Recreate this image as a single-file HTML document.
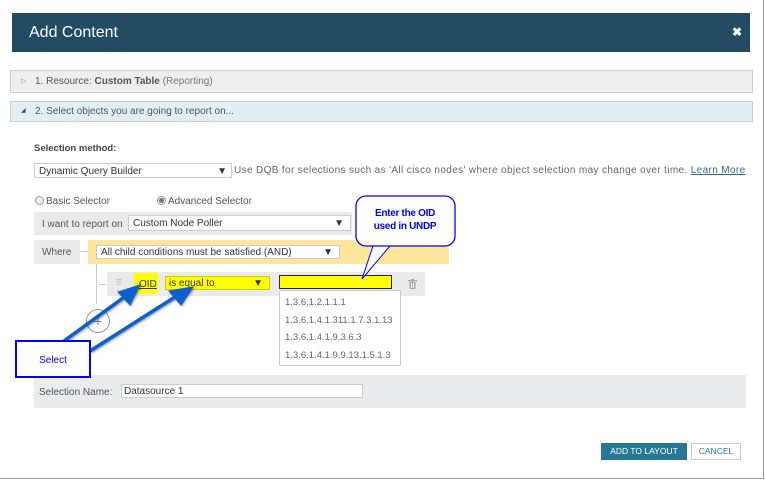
<!DOCTYPE html>
<html><head><style>
*{box-sizing:border-box;margin:0;padding:0}
body{width:765px;height:480px;background:#fff;font-family:"Liberation Sans",sans-serif;font-size:10px;color:#333;position:relative;overflow:hidden}
.a{position:absolute;white-space:nowrap}
</style></head><body>
<div class="a" style="left:0;top:0;width:764px;height:479px;border-right:1px solid #999;border-bottom:1px solid #999"></div>
<div class="a" style="left:12px;top:13px;width:738px;height:39px;background:#234b63"></div>
<div class="a" style="left:29px;top:24px;font-size:16px;color:#fff">Add Content</div>
<div class="a" style="left:732px;top:25px;font-size:12px;color:#fff;font-weight:bold">✖</div>

<div class="a" style="left:10px;top:70px;width:743px;height:23px;background:#eee;border:1px solid #ccc"></div>
<div class="a" style="left:21px;top:77px;font-size:7px;color:#999">▷</div>
<div class="a" style="left:35px;top:76px;color:#555">1. Resource: <b>Custom Table</b> <span style="color:#777">(Reporting)</span></div>
<div class="a" style="left:10px;top:101px;width:743px;height:21px;background:#e1eff5;border:1px solid #ccc"></div>
<div class="a" style="left:21px;top:107px;font-size:6px;color:#444">◢</div>
<div class="a" style="left:35px;top:106px;color:#555">2. Select objects you are going to report on...</div>

<div class="a" style="left:34px;top:143px;font-weight:bold;color:#444;font-size:9.5px">Selection method:</div>
<div class="a" style="left:34px;top:163px;width:198px;height:15px;border:1px solid #ccc;padding:2px 4px 0">Dynamic Query Builder<span style="position:absolute;right:4px">▼</span></div>
<div class="a" style="left:234px;top:165px;color:#666;letter-spacing:0.36px">Use DQB for selections such as 'All cisco nodes' where object selection may change over time. <span style="color:#2a6a9a;text-decoration:underline">Learn More</span></div>

<div class="a" style="left:35px;top:196px;width:9px;height:9px;border:1px solid #999;border-radius:50%;background:#eee"></div>
<div class="a" style="left:46px;top:196px;color:#555">Basic Selector</div>
<div class="a" style="left:157px;top:196px;width:9px;height:9px;border:1px solid #999;border-radius:50%;background:#eee"><div style="width:5px;height:5px;margin:1px;border-radius:50%;background:#777"></div></div>
<div class="a" style="left:168px;top:196px;color:#555">Advanced Selector</div>

<div class="a" style="left:34px;top:212px;width:318px;height:23px;background:#eaeaea"></div>
<div class="a" style="left:42px;top:219px;color:#555">I want to report on</div>
<div class="a" style="left:128px;top:215px;width:223px;height:16px;border:1px solid #ccc;background:#fff;padding:2px 4px 0">Custom Node Poller<span style="position:absolute;right:6px">▼</span></div>

<div class="a" style="left:34px;top:240px;width:46px;height:24px;background:#eaeaea"></div>
<div class="a" style="left:42px;top:247px;color:#555">Where</div>
<div class="a" style="left:80px;top:251px;width:8px;height:1px;background:#ccc"></div>
<div class="a" style="left:88px;top:240px;width:361px;height:24px;background:#fde69c"></div>
<div class="a" style="left:96px;top:245px;width:244px;height:14px;border:1px solid #ccc;background:#fff;padding:1px 4px 0">All child conditions must be satisfied (AND)<span style="position:absolute;right:6px">▼</span></div>
<div class="a" style="left:96px;top:264px;width:1px;height:40px;background:#ccc"></div>
<div class="a" style="left:99px;top:284px;width:7px;height:1px;background:#ccc"></div>

<div class="a" style="left:107px;top:272px;width:318px;height:24px;background:#eaeaea"></div>
<div class="a" style="left:116px;top:278px;color:#aaa;font-size:8px">⠿</div>
<div class="a" style="left:134px;top:273px;width:24px;height:21px;background:#ffff00"></div>
<div class="a" style="left:139px;top:279px;text-decoration:underline;color:#333">OID</div>
<div class="a" style="left:165px;top:276px;width:105px;height:14px;background:#ffff00;border:1px solid #cc0;padding:1px 3px 0">is equal to<span style="position:absolute;right:6px">▼</span></div>
<div class="a" style="left:279px;top:275px;width:113px;height:14px;background:#ffff00;border:1px solid #224"></div>
<svg class="a" style="left:408px;top:279px" width="9" height="10"><rect x="0" y="1" width="9" height="1.5" fill="#9ab"/><rect x="3" y="0" width="3" height="1" fill="#9ab"/><rect x="1.5" y="3" width="6" height="7" fill="#9ab"/><rect x="3" y="4" width="1" height="5" fill="#fff"/><rect x="5" y="4" width="1" height="5" fill="#fff"/></svg>
<div class="a" style="left:279px;top:290px;width:122px;height:76px;border:1px solid #ccc;background:#fff;color:#666;line-height:17.5px;padding:3px 5px;font-size:9.5px">1.3.6.1.2.1.1.1<br>1.3.6.1.4.1.311.1.7.3.1.13<br>1.3.6.1.4.1.9.3.6.3<br>1.3.6.1.4.1.9.9.13.1.5.1.3</div>
<div class="a" style="left:86px;top:309px;width:24px;height:24px;border:1px solid #999;border-radius:50%;background:#fff;color:#688;text-align:center;line-height:22px;font-size:14px">+</div>

<div class="a" style="left:34px;top:375px;width:712px;height:33px;background:#eaebec"></div>
<div class="a" style="left:39px;top:387px;color:#555">Selection Name:</div>
<div class="a" style="left:121px;top:384px;width:242px;height:14px;border:1px solid #ccc;background:#fff;padding:1px 2px 0;color:#333">Datasource 1</div>

<div class="a" style="left:601px;top:443px;width:86px;height:17px;background:#267996;color:#fff;text-align:center;line-height:17px;font-size:8.5px">ADD TO LAYOUT</div>
<div class="a" style="left:691px;top:443px;width:50px;height:17px;border:1px solid #ccc;color:#267996;text-align:center;line-height:15px;font-size:8.5px">CANCEL</div>

<svg class="a" style="left:0;top:0" width="765" height="480">
<defs><filter id="s"><feDropShadow dx="1" dy="1" stdDeviation="1" flood-opacity=".4"/></filter></defs>
<path d="M375 240 L362 279 L395 240" fill="#fff" stroke="#00f" stroke-width="1"/>
<rect x="356" y="196" width="99" height="50" rx="10" fill="#fff" stroke="#00f" stroke-width="1.3"/>
<rect x="372" y="239" width="26" height="6" fill="#fff"/>
<text x="405" y="216" text-anchor="middle" font-family="Liberation Sans" font-size="10" font-weight="bold" fill="#00f" letter-spacing="-0.3">Enter the OID</text>
<text x="405" y="229" text-anchor="middle" font-family="Liberation Sans" font-size="10" font-weight="bold" fill="#00f" letter-spacing="-0.3">used in UNDP</text>
<g filter="url(#s)" fill="#0a5fd0" stroke="#0a5fd0">
<line x1="64" y1="341" x2="127" y2="295" stroke-width="3.5"/>
<polygon points="140,285 118,292 130,305" />
<line x1="90" y1="351" x2="175" y2="297" stroke-width="3.5"/>
<polygon points="193,287 169,291 181,305" />
</g>
<rect x="16" y="341" width="74" height="36" fill="#fff" stroke="#00f" stroke-width="2"/>
<text x="53" y="363" text-anchor="middle" font-family="Liberation Sans" font-size="10" fill="#00f">Select</text>
</svg>
</body></html>
